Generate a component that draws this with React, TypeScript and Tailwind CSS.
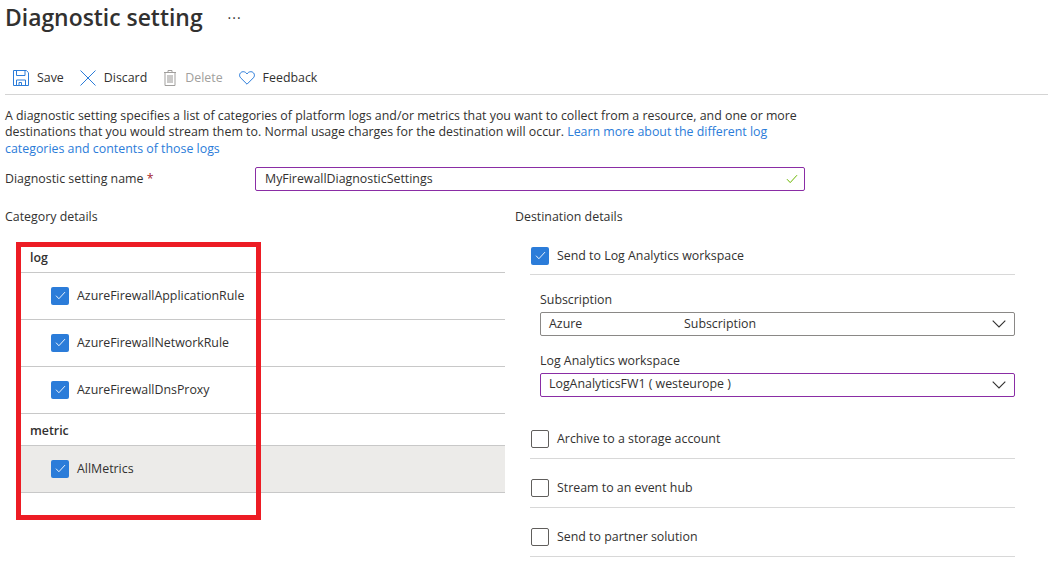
import type { ReactNode } from "react";

function Check({ className }: { className: string }) {
  return (
    <svg viewBox="0 0 12 10" fill="none" className={className}>
      <path d="M1 5.2 4.2 8.6 11 1.2" stroke="currentColor" strokeWidth="1" />
    </svg>
  );
}

function Box({ checked }: { checked: boolean }) {
  if (!checked) {
    return <div className="h-[18px] w-[18px] shrink-0 rounded-[2px] border border-[#605e5c] bg-white" />;
  }
  return (
    <div className="flex h-[18px] w-[18px] shrink-0 items-center justify-center rounded-[2px] bg-[#2b7cd9] text-white">
      <Check className="h-[9px] w-[11px]" />
    </div>
  );
}

function Chevron() {
  return (
    <svg viewBox="0 0 14 8" fill="none" className="h-[8px] w-[14px] text-[#323130]">
      <path d="M.7.7 7 7 13.3.7" stroke="currentColor" strokeWidth="1.1" />
    </svg>
  );
}

function ToolButton({ icon, label, muted }: { icon: ReactNode; label: string; muted?: boolean }) {
  return (
    <div className={`flex items-center gap-[8px] ${muted ? "text-[#a19f9d]" : "text-[#323130]"}`}>
      {icon}
      <span className="pt-[2px]">{label}</span>
    </div>
  );
}

function CategoryRow({ label, active }: { label: string; active?: boolean }) {
  return (
    <div className={`flex h-[47px] items-center gap-[8px] border-b border-[#c8c8c8] pl-[31px] ${active ? "bg-[#ecebe9]" : ""}`}>
      <Box checked />
      <span className="pt-[2px]">{label}</span>
    </div>
  );
}

function DestRow({ label, checked }: { label: string; checked?: boolean }) {
  return (
    <div className={`flex h-[49px] items-end gap-[8px] border-b border-[#d8d8d8] pl-[1px] ${checked ? "pb-[9px]" : "pb-[10px]"}`}>
      <Box checked={!!checked} />
      <span className="leading-[18px]">{label}</span>
    </div>
  );
}

export default function App() {
  return (
    <div className="relative h-[575px] w-[1048px] overflow-hidden bg-white text-[12.38px] leading-[16.5px] text-[#323130] [font-family:'Open_Sans',sans-serif]">
      {/* header */}
      <div className="flex h-[35px] items-center pl-[5px]">
        <h1 className="text-[22.9px] font-semibold leading-[35px] text-[#323130]">Diagnostic setting</h1>
        <span className="ml-[25px] text-[14px] leading-[20px] tracking-[1px]">···</span>
      </div>

      {/* toolbar */}
      <div className="ml-[5px] mt-[26px] flex h-[34px] items-center gap-[16px] border-b border-[#d4d4d4] pl-[8px]">
        <ToolButton
          label="Save"
          icon={
            <svg viewBox="0 0 16 16" fill="none" className="h-[16px] w-[16px] text-[#2b7cd9]">
              <path d="M.5.5h12.8l2.2 2.2v12.8H.5z M3.5.5v5h8.5v-5 M3.5 15.5v-5.500h9v5.500 M6 15.5v-3h2.5v3" stroke="currentColor" />
            </svg>
          }
        />
        <ToolButton
          label="Discard"
          icon={
            <svg viewBox="0 0 16 16" fill="none" className="h-[16px] w-[16px] text-[#2b7cd9]">
              <path d="M.5.5 15.5 15.5M15.5.5.5 15.5" stroke="currentColor" />
            </svg>
          }
        />
        <ToolButton
          muted
          label="Delete"
          icon={
            <svg viewBox="0 0 14 16" fill="none" className="h-[16px] w-[14px] text-[#a19f9d]">
              <path d="M1 2.5h12M5 2.5V.5h4v2M2 2.5h10v13H2z" stroke="currentColor" />
              <path d="M4 5h6v8H4z" fill="currentColor" opacity=".55" />
            </svg>
          }
        />
        <ToolButton
          label="Feedback"
          icon={
            <svg viewBox="0 0 16 14" fill="none" className="h-[14px] w-[16px] text-[#2b7cd9]">
              <path d="M8 13.2 1.6 6.8C-.6 4.4 1 .7 4.2.7 5.8.7 7.2 1.6 8 3c.8-1.4 2.2-2.3 3.8-2.3 3.2 0 4.8 3.7 2.6 6.1z" stroke="currentColor" />
            </svg>
          }
        />
      </div>

      {/* description */}
      <p className="ml-[5px] mt-[12.5px] w-[800px]">
        A diagnostic setting specifies a list of categories of platform logs and/or metrics that you want to collect from a resource, and one or more destinations that you would stream them to. Normal usage charges for the destination will occur.{" "}
        <span className="text-[#2b7cd9]">Learn more about the different log categories and contents of those logs</span>
      </p>

      {/* name */}
      <div className="ml-[5px] mt-[9.5px] flex items-center">
        <div className="w-[250px] pt-[2px]">
          Diagnostic setting name <span className="text-[#a4262c]">*</span>
        </div>
        <div className="flex h-[24px] w-[550px] items-center justify-between rounded-[2px] border border-[#8a2da5] pl-[9px] pr-[6px]">
          <span className="pt-[1px]">MyFirewallDiagnosticSettings</span>
          <Check className="h-[10px] w-[12px] text-[#6bb700]" />
        </div>
      </div>

      <div className="mt-[18px] flex">
        {/* category details */}
        <div className="ml-[5px] w-[500px]">
          <div className="h-[17px]">Category details</div>
          <div className="ml-[15px] mt-[15px] w-[485px]">
            <div className="flex h-[32px] items-center border-b border-[#c8c8c8] pl-[10px] pt-[5px] font-semibold">log</div>
            <CategoryRow label="AzureFirewallApplicationRule" />
            <CategoryRow label="AzureFirewallNetworkRule" />
            <CategoryRow label="AzureFirewallDnsProxy" />
            <div className="flex h-[32px] items-center border-b border-[#c8c8c8] pl-[10px] pt-[5px] font-semibold">metric</div>
            <CategoryRow label="AllMetrics" active />
          </div>
        </div>

        {/* destination details */}
        <div className="ml-[10px] w-[500px]">
          <div className="h-[17px]">Destination details</div>
          <div className="ml-[15px] w-[485px]">
            <DestRow label="Send to Log Analytics workspace" checked />
            <div className="pl-[10px] pt-[17px]">
              <div className="h-[17px]">Subscription</div>
              <div className="mt-[3px] flex h-[24px] items-center justify-between rounded-[2px] border border-[#8a8886] pl-[8px] pr-[8px]">
                <div className="flex pt-[1px]">
                  <span className="w-[135px]">Azure</span>
                  <span>Subscription</span>
                </div>
                <Chevron />
              </div>
              <div className="mt-[17px] h-[17px]">Log Analytics workspace</div>
              <div className="mt-[3px] flex h-[24px] items-center justify-between rounded-[2px] border border-[#8a2da5] pl-[8px] pr-[8px]">
                <span>LogAnalyticsFW1 ( westeurope )</span>
                <Chevron />
              </div>
            </div>
            <div className="mt-[13px]">
              <DestRow label="Archive to a storage account" />
              <DestRow label="Stream to an event hub" />
              <DestRow label="Send to partner solution" />
            </div>
          </div>
        </div>
      </div>

      {/* red highlight drawn over the screenshot */}
      <div className="absolute left-[16px] top-[242px] h-[278px] w-[245px] border-[5px] border-[#ed1c24]" />
    </div>
  );
}
